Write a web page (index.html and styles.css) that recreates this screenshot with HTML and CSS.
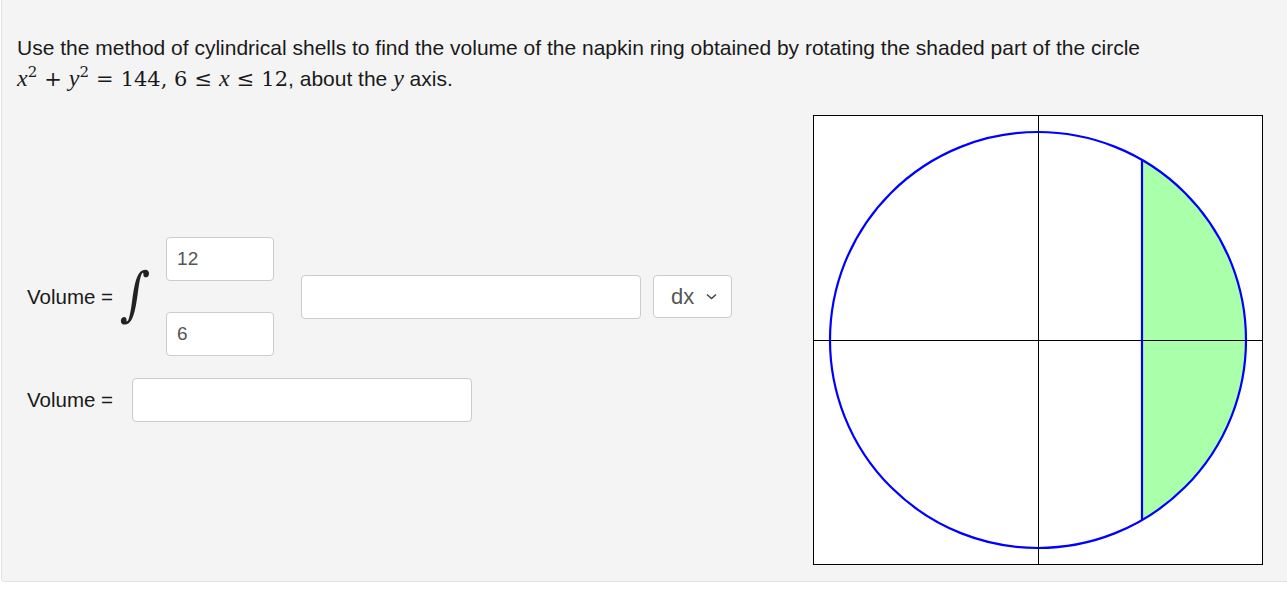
FILE: index.html
```html
<!DOCTYPE html>
<html>
<head>
<meta charset="utf-8">
<link rel="stylesheet" href="styles.css">
</head>
<body>
<div class="panel">
  <p class="prompt">Use the method of cylindrical shells to find the volume of the napkin ring obtained by rotating the shaded part of the circle<br>
  <span class="math"><i>x</i><sup>2</sup><span class="op">+</span><i>y</i><sup>2</sup><span class="op">=</span>144, 6<span class="op">≤</span><i>x</i><span class="op">≤</span>12</span>, about the <span class="math"><i>y</i></span> axis.</p>
  <div class="content">
    <div class="form">
      <div class="row row-integral">
        <span class="label">Volume =</span>
        <span class="integral">∫</span>
        <div class="limits">
          <div class="field small">12</div>
          <div class="field small">6</div>
        </div>
        <div class="field wide"></div>
        <div class="select">dx <svg class="chev" width="11" height="7" viewBox="0 0 11 7"><path d="M1 1.5 L5.5 5.5 L10 1.5" fill="none" stroke="#444" stroke-width="1.5"/></svg></div>
      </div>
      <div class="row row-answer">
        <span class="label">Volume =</span>
        <div class="field wide"></div>
      </div>
    </div>
    <div class="graph">
      <svg width="448" height="448" viewBox="0 0 448 448">
        <rect width="448" height="448" fill="#fff"/>
        <path d="M328 44 A208 208 0 0 1 328 404 Z" fill="#aaffaa"/>
        <line x1="224.5" y1="0" x2="224.5" y2="448" stroke="#000" stroke-width="1"/>
        <line x1="0" y1="224.5" x2="448" y2="224.5" stroke="#000" stroke-width="1"/>
        <circle cx="224" cy="224" r="208" fill="none" stroke="#0000ff" stroke-width="2.2"/>
        <line x1="328" y1="44" x2="328" y2="404" stroke="#0000ff" stroke-width="2.2"/>
      </svg>
    </div>
  </div>
</div>
</body>
</html>
```

FILE: styles.css
```css
html, body {
  margin: 0;
  padding: 0;
  background: #fff;
}
body {
  font-family: "Liberation Sans", Arial, sans-serif;
  color: #222;
}
.panel {
  margin-left: 1px;
  background: #f4f4f4;
  border: 1px solid #e2e2e2;
  border-top: none;
  border-right: none;
  border-radius: 0 0 0 4px;
  padding: 33px 0 0 15px;
  box-sizing: border-box;
  height: 582px;
}
.prompt {
  margin: 0;
  font-size: 21px;
  line-height: 30px;
  color: #1a1a1a;
}
.math {
  font-family: "DejaVu Serif", "Liberation Serif", serif;
  font-size: 21px;
}
.math i {
  font-family: "Liberation Serif", serif;
  font-size: 24px;
}
.math .op {
  margin: 0 7px;
}
.math sup {
  font-size: 15px;
  line-height: 0;
  vertical-align: 9px;
}
.content {
  display: flex;
  margin-top: 21px;
}
.form {
  padding-left: 10px;
  padding-top: 122px;
  width: 786px;
}
.row {
  display: flex;
  align-items: center;
}
.label {
  font-size: 20.5px;
  color: #1a1a1a;
}
.integral {
  font-family: "DejaVu Serif", serif;
  font-size: 48px;
  font-style: italic;
  margin-left: 10px;
  margin-right: 18px;
  transform: translateY(-4px) scaleY(1.22) skewX(-8deg);
  line-height: 1;
}
.limits {
  display: flex;
  flex-direction: column;
  gap: 31px;
}
.field {
  box-sizing: border-box;
  height: 44px;
  background: #fff;
  border: 1px solid #ccc;
  border-radius: 4px;
  font-size: 19px;
  color: #555;
  padding: 0 10px;
  display: flex;
  align-items: center;
}
.small {
  width: 108px;
}
.wide {
  width: 340px;
}
.row-integral .wide {
  margin-left: 27px;
}
.select {
  box-sizing: border-box;
  margin-left: 12px;
  width: 79px;
  height: 43px;
  background: #fff;
  border: 1px solid #ccc;
  border-radius: 4px;
  font-size: 22px;
  color: #555;
  display: flex;
  align-items: center;
  padding-left: 17px;
  gap: 12px;
}
.row-answer {
  margin-top: 22px;
}
.row-answer .wide {
  margin-left: 19px;
}
.graph {
  border: 1px solid #000;
  width: 448px;
  height: 448px;
}
.graph svg {
  display: block;
}
```
